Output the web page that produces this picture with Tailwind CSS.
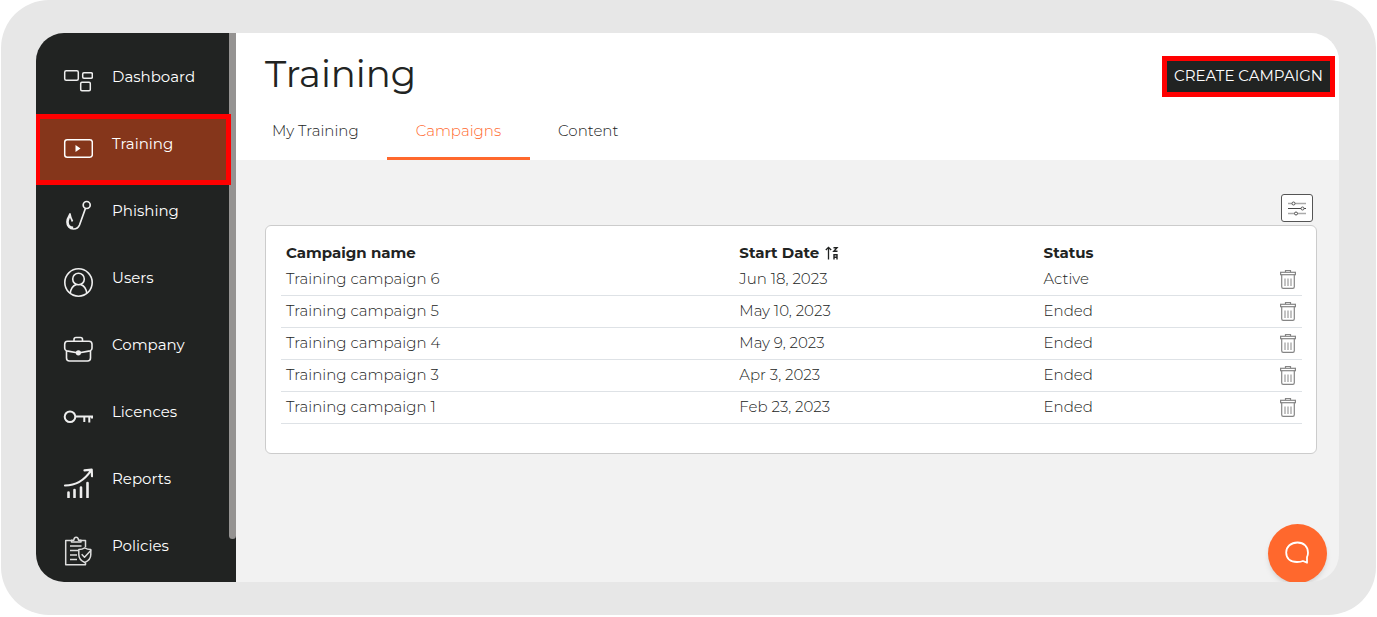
<!DOCTYPE html>
<html lang="en">
<head>
<meta charset="utf-8">
<meta name="viewport" content="width=device-width, initial-scale=1">
<title>Training campaigns</title>
<script src="https://cdn.jsdelivr.net/npm/@tailwindcss/browser@4"></script>
</head>
<body class="bg-white font-['Montserrat','Inter',sans-serif] text-[15px] text-[#212322]">
<div class="mx-px flex h-[calc(100vh-2px)] rounded-[48px] bg-[#e7e7e7] pt-[33px] pr-[37px] pb-[33px] pl-[35px]">
  <div class="relative flex flex-1 overflow-hidden rounded-[28px] bg-[#f2f2f2]">

    <aside class="flex w-[200px] shrink-0 bg-[#212322] text-white">
      <nav class="flex-1 pt-3.5" aria-label="Main">
        <ul>
          <li><a href="#" class="flex h-[67px] items-center gap-[19px] pl-[27px]">
            <svg class="size-[30px] shrink-0" viewBox="0 0 30 30" fill="none" stroke="#eee" stroke-width="1.5"><rect x="1.7" y="4.7" width="13.6" height="9.6" rx="1.5"/><rect x="19.7" y="6.7" width="9.6" height="5.6" rx="1.2"/><rect x="17.7" y="16.2" width="9.6" height="8.6" rx="1.2"/></svg>
            <span class="pb-1.5">Dashboard</span></a></li>
          <li class="relative"><a href="#" aria-current="page" class="flex h-[67px] items-center gap-[19px] bg-[#85361b] pl-[27px]">
            <svg class="size-[30px] shrink-0" viewBox="0 0 30 30" fill="none" stroke="#fff" stroke-width="1.5"><rect x="1.7" y="6.7" width="27.6" height="17.6" rx="2.5"/><path d="M12.500 12v7l5-3.500z" fill="#fff" stroke="none"/></svg>
            <span class="pb-1.5">Training</span></a>
            <div class="pointer-events-none absolute top-0 -right-0.5 -bottom-1 left-0 border-[5px] border-l-4 border-[#ff0000]"></div></li>
          <li><a href="#" class="flex h-[67px] items-center gap-[19px] pl-[27px]">
            <svg class="size-[30px] shrink-0" viewBox="0 0 30 30" fill="none" stroke="#eee" stroke-width="1.700" stroke-linejoin="round"><circle cx="23.700" cy="5" r="3.500"/><path d="M22.500 8.300 16.500 25c-1.200 3-3.500 4-6 4-4 0-6.500-3-6.500-7 0-3.500 1.500-5.500 3-8 .3 2.500 1 4.500 2.500 7.500M7 14c-.6 4-2.200 5.500-2 8.500.2 3 2.300 4.800 5.200 4.800"/></svg>
            <span class="pb-1.5">Phishing</span></a></li>
          <li><a href="#" class="flex h-[67px] items-center gap-[19px] pl-[27px]">
            <svg class="size-[30px] shrink-0" viewBox="0 0 30 30" fill="none" stroke="#eee" stroke-width="1.600"><circle cx="15.500" cy="15.500" r="13.700"/><circle cx="15.500" cy="12" r="5.800"/><path d="M7.300 26.500c.4-5 3-8 6-9M23.700 26.500c-.4-5-3-8-6-9"/></svg>
            <span class="pb-1.5">Users</span></a></li>
          <li><a href="#" class="flex h-[67px] items-center gap-[19px] pl-[27px]">
            <svg class="size-[30px] shrink-0" viewBox="0 0 30 30" fill="none" stroke="#eee" stroke-width="1.600" stroke-linejoin="round"><path d="M11 7V5.500c0-1.300.8-2 2-2h4.500c1.200 0 2 .7 2 2V7"/><path d="M4.500 7.300h21.500c2 0 3 1 3 3v4c0 1.500-.7 2.300-2 2.600L15.300 19 3.700 16.900c-1.300-.3-2-1.100-2-2.600v-4c0-2 1-3 2.800-3z"/><path d="M3.500 17v7c0 2 1 3 3 3H24.500c2 0 3-1 3-3v-7"/><circle cx="15.400" cy="18.800" r="2.600" fill="#eee" stroke="none"/></svg>
            <span class="pb-1.5">Company</span></a></li>
          <li><a href="#" class="flex h-[67px] items-center gap-[19px] pl-[27px]">
            <svg class="size-[30px] shrink-0" viewBox="0 0 30 30" fill="none" stroke="#eee" stroke-width="2"><circle cx="7" cy="15.700" r="5.300"/><path d="M12.300 15.500H30M21.300 15.500v5.500M26.300 15.500v6M29 15.500v2"/></svg>
            <span class="pb-1.5">Licences</span></a></li>
          <li><a href="#" class="flex h-[67px] items-center gap-[19px] pl-[27px]">
            <svg class="size-[30px] shrink-0" viewBox="0 0 30 30" fill="none" stroke="#eee" stroke-width="2.200" stroke-linecap="round" stroke-linejoin="round"><path d="M2 17.500C12 17.500 21 13 28 2.500M21.500 2.300 28.700 1.700l.3 6.500"/><path stroke-width="2.600" d="M5.500 24.500v4.700M11.500 22v7.200M18 19.500v9.700M24.500 15v14.200"/></svg>
            <span class="pb-1.5">Reports</span></a></li>
          <li><a href="#" class="flex h-[67px] items-center gap-[19px] pl-[27px]">
            <svg class="h-[32px] w-[30px] shrink-0" viewBox="0 -2 30 32" fill="none" stroke="#ddd" stroke-width="1.500" stroke-linejoin="round"><path d="M9 4.500H2.700v24.300H22.500V27M16 4.500h6.500V11"/><path d="M8.500 6V4.300h2.300c.3-4 4.400-4 4.700 0h2.500V6z"/><path d="M7 10h11.500M7 14.500h8M7 19h7M7 23.500h7"/><path d="M21.800 11.800c2 1.200 3.700 1.600 6 1.700v5c0 4-2.500 6.500-6 8-3.500-1.500-6-4-6-8v-5c2.300-.1 4-.5 6-1.700z"/><path d="m18.700 18.300 2.800 3 6.500-7"/></svg>
            <span class="pb-1.5">Policies</span></a></li>
        </ul>
      </nav>
      <div class="w-[7px] shrink-0"><div class="h-[92.2%] rounded-b-full bg-[#959392]"></div></div>
    </aside>

    <main class="flex min-w-0 flex-1 flex-col">
      <header class="bg-white">
        <div class="flex h-[76px] items-start justify-between pr-1 pl-[29px]">
          <h1 class="pt-[17px] text-[37px] leading-[48px]">Training</h1>
          <button class="mt-[23px] h-[41px] border-[5px] border-[#ff0000] bg-[#212322] px-[7px] text-[15px] text-white">CREATE CAMPAIGN</button>
        </div>
        <nav class="flex h-[51px] pl-2 font-light" aria-label="Training sections">
          <a href="#" class="border-b-[3px] border-transparent px-7 pt-[11px]">My Training</a>
          <a href="#" aria-current="page" class="border-b-[3px] border-[#ff682d] px-[29px] pt-[11px] text-[#ff682d]">Campaigns</a>
          <a href="#" class="border-b-[3px] border-transparent px-7 pt-[11px]">Content</a>
        </nav>
      </header>

      <div class="pt-[34px] pr-[22px] pl-[29px]">
        <div class="flex justify-end pr-1 pb-[3px]">
          <button aria-label="Filter" class="flex h-7 w-8 items-center justify-center rounded-[3px] border border-[#555] bg-white">
            <svg class="h-4 w-5" viewBox="0 0 20 16" fill="none"><path d="M1 3.500h18M1 13.500h18" stroke="#aaa" stroke-width="1.400"/><path d="M1 8.500h18" stroke="#444"/><g fill="#fff" stroke="#555"><circle cx="6.500" cy="3.500" r="1.500"/><circle cx="15.500" cy="8.500" r="1.500"/><circle cx="9" cy="13.500" r="1.500"/></g></svg>
          </button>
        </div>
        <section class="rounded-md border border-[#ccc] bg-white pt-[17px] pr-3.5 pb-[29px] pl-[15px]">
          <table class="w-full table-fixed border-collapse text-left leading-5 font-light">
            <colgroup><col class="w-[44.4%]"><col class="w-[29.8%]"><col><col class="w-[30px]"></colgroup>
            <thead class="font-bold">
              <tr class="h-5">
                <th class="pl-[5px]">Campaign name</th>
                <th class="pl-[5px]"><span class="flex items-center gap-1.5">Start Date
                  <svg class="h-3.5 w-3.5" viewBox="0 0 14 14" fill="none" stroke="#212322"><path stroke-width="1.300" d="M3.500 13.500V1.500M.8 4 3.500 1.300 6.200 4"/><path stroke-width="1.400" d="M8.500 1.700h3.500L8.800 5.300H12.500M9 13.500V8.700h3v4.800M9 11.200h3"/></svg></span></th>
                <th class="pl-[5px]">Status</th>
                <th aria-label="Actions"></th>
              </tr>
            </thead>
            <tbody id="rows"></tbody>
          </table>
        </section>
      </div>
    </main>

    <button aria-label="Open chat" class="absolute right-3 -bottom-px flex size-[59px] items-center justify-center rounded-full bg-[#ff682d] pr-px pb-px shadow-md">
      <svg class="size-6" viewBox="0 0 24 24" fill="none" stroke="#fff" stroke-width="1.800" stroke-linejoin="round"><path d="M22 21.700v-5.500c.7-1.500 1-3 1-4.400C23 5.500 19 1.500 12.500 1.500S1.200 5.500 1.200 11.500s4.300 9.500 10.800 9.500c2.200 0 4.300-.2 6-1z"/></svg>
    </button>
  </div>
</div>

<template id="row">
  <tr class="h-8 border-b border-[#dee2e6]">
    <td class="pl-[5px]"></td><td class="pl-[5px]"></td><td class="pl-[5px]"></td>
    <td class="pl-2"><button aria-label="Delete" class="block">
      <svg class="h-5 w-4" viewBox="0 0 16 20" fill="none" stroke="#858585" stroke-width="1.200"><path d="M5.500 3V1.500h5V3"/><rect x=".6" y="3.300" width="14.800" height="2.400"/><path d="M1.700 5.500v12.300c0 1 .5 1.600 1.500 1.600h9.600c1 0 1.500-.6 1.500-1.600V5.500"/><path stroke="#aaa" stroke-width="1.400" d="M5 9.500v7.500M8 9.500v7.500M11 9.500v7.500"/></svg>
    </button></td>
  </tr>
</template>
<script>
  const campaigns = [
    ['Training campaign 6', 'Jun 18, 2023', 'Active'],
    ['Training campaign 5', 'May 10, 2023', 'Ended'],
    ['Training campaign 4', 'May 9, 2023', 'Ended'],
    ['Training campaign 3', 'Apr 3, 2023', 'Ended'],
    ['Training campaign 1', 'Feb 23, 2023', 'Ended'],
  ];
  const template = document.getElementById('row');
  for (const campaign of campaigns) {
    const row = template.content.cloneNode(true);
    const cells = row.querySelectorAll('td');
    campaign.forEach((text, i) => { cells[i].textContent = text; });
    row.querySelector('button').setAttribute('aria-label', 'Delete ' + campaign[0]);
    document.getElementById('rows').append(row);
  }
</script>
</body>
</html>
